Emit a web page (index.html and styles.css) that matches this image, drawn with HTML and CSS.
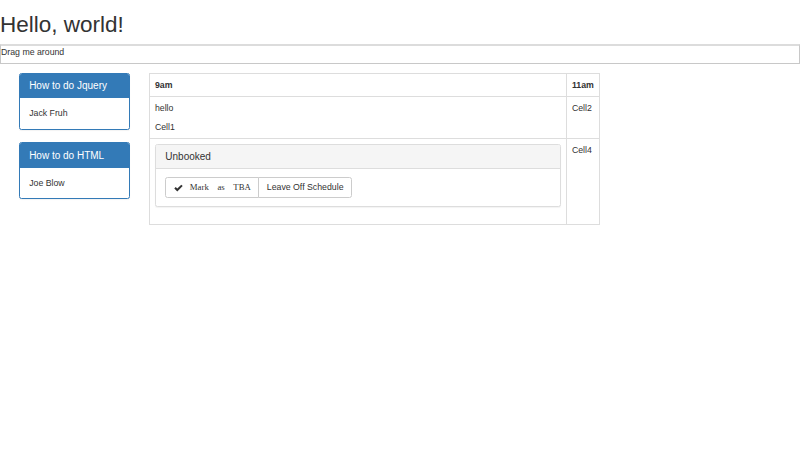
FILE: index.html
```html
<!DOCTYPE html>
<html lang="en">
<head>
    <meta charset="UTF-8">
    <meta name="viewport" content="width=device-width, initial-scale=1.0">
    <title>Schedule</title>
    <link rel="stylesheet" href="styles.css">
</head>
<body>
    <h1 class="page-title">Hello, world!</h1>

    <div class="drag-box">Drag me around</div>

    <div class="container-fluid">
        <div class="layout">
            <div class="col-side">
                <div class="panel panel-primary">
                    <div class="panel-heading">How to do Jquery</div>
                    <div class="panel-body">Jack Fruh</div>
                </div>
                <div class="panel panel-primary">
                    <div class="panel-heading">How to do HTML</div>
                    <div class="panel-body">Joe Blow</div>
                </div>
            </div>

            <div class="col-main">
                <table class="schedule">
                    <thead>
                        <tr>
                            <th class="slot-wide">9am</th>
                            <th class="slot-narrow">11am</th>
                        </tr>
                    </thead>
                    <tbody>
                        <tr>
                            <td>
                                <p class="cell-line">hello</p>
                                <div>Cell1</div>
                            </td>
                            <td>Cell2</td>
                        </tr>
                        <tr>
                            <td>
                                <div class="panel panel-default">
                                    <div class="panel-heading">Unbooked</div>
                                    <div class="panel-body">
                                        <div class="btn-group">
                                            <button class="btn btn-tba">
                                                <svg class="icon-ok" viewBox="0 0 12 10" width="9" height="8">
                                                    <path d="M0.4 5.6 L2.3 3.7 L4.4 5.8 L9.7 0.5 L11.6 2.4 L4.4 9.6 Z" fill="#333"/>
                                                </svg>
                                                <span class="tba-text">Mark as TBA</span>
                                            </button>
                                            <button class="btn">Leave Off Schedule</button>
                                        </div>
                                    </div>
                                </div>
                            </td>
                            <td>Cell4</td>
                        </tr>
                    </tbody>
                </table>
            </div>
        </div>
    </div>
</body>
</html>
```

FILE: styles.css
```css
* {
    box-sizing: border-box;
}

body {
    margin: 0;
    font-family: "Liberation Sans", Arial, sans-serif;
    font-size: 8.75px;
    line-height: 1.42857;
    color: #333;
    background: #fff;
}

.page-title {
    margin: 12.5px 0 6.25px;
    font-size: 22.5px;
    font-weight: 500;
    line-height: 1.1;
}

.drag-box {
    height: 20px;
    border: 1px solid #c8c8c8;
    border-top: 2px solid #dcdcdc;
    line-height: 13px;
}

.container-fluid {
    padding: 9.4px 9.375px 0;
}

.layout {
    display: flex;
    align-items: flex-start;
}

.col-side {
    width: 130.2px;
    padding: 0 9.375px;
    flex-shrink: 0;
}

.col-main {
    padding: 0 9.375px;
}

/* panels */
.panel {
    margin-bottom: 12.5px;
    background: #fff;
    border: 1px solid transparent;
    border-radius: 2.5px;
    box-shadow: 0 1px 1px rgba(0, 0, 0, 0.05);
}

.panel-heading {
    padding: 6.25px 9.4px;
    font-size: 10px;
    line-height: 1.1;
    border-bottom: 1px solid transparent;
    border-radius: 1.5px 1.5px 0 0;
}

.panel-body {
    padding: 9px 9.4px;
}

.panel-primary {
    border-color: #337ab7;
}

.panel-primary .panel-heading {
    background: #337ab7;
    border-color: #337ab7;
    color: #fff;
}

.panel-default {
    border-color: #ddd;
}

.panel-default .panel-heading {
    background: #f5f5f5;
    border-color: #ddd;
    color: #333;
    padding: 6px 9.4px;
}

.panel-default .panel-body {
    padding: 8px 9.4px;
}

/* schedule table */
.schedule {
    width: 451px;
    border-collapse: collapse;
    border: 1px solid #ddd;
}

.schedule th,
.schedule td {
    padding: 5px;
    border: 1px solid #ddd;
    text-align: left;
    vertical-align: top;
}

.schedule thead th {
    font-weight: bold;
}

.slot-narrow {
    width: 33px;
}

.cell-line {
    margin: 0 0 6px;
}

.schedule .panel {
    margin-bottom: 12px;
}

/* buttons */
.btn-group {
    display: flex;
    width: fit-content;
}

.btn {
    display: inline-flex;
    align-items: center;
    margin: 0;
    padding: 3px 7.5px;
    font-family: "Liberation Sans", Arial, sans-serif;
    font-size: 8.75px;
    line-height: 12.5px;
    color: #333;
    background: #fff;
    border: 1px solid #ccc;
    border-radius: 2.5px;
    cursor: pointer;
}

.btn-group .btn + .btn {
    margin-left: -1px;
    border-top-left-radius: 0;
    border-bottom-left-radius: 0;
}

.btn-group .btn:first-child {
    border-top-right-radius: 0;
    border-bottom-right-radius: 0;
}

.icon-ok {
    margin-right: 7px;
}

.tba-text {
    font-family: "Liberation Serif", "Times New Roman", serif;
    word-spacing: 6.5px;
}
```
